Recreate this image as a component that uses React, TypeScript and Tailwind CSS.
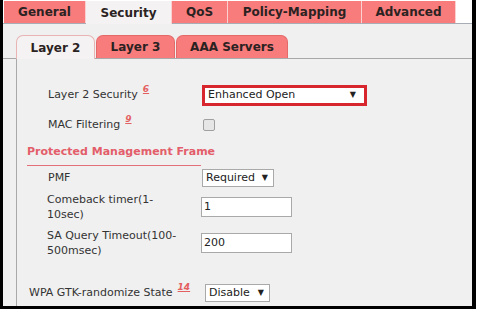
import React from 'react';

const font = { fontFamily: '"DejaVu Sans", Verdana, sans-serif' };

const mainTabs = [
  { label: 'General', w: 'w-[82px]' },
  { label: 'Security', w: 'w-[86px]', active: true },
  { label: 'QoS', w: 'w-[56px]' },
  { label: 'Policy-Mapping', w: 'w-[134px]' },
  { label: 'Advanced', w: 'w-[94px]' },
];

const subTabs = [
  { label: 'Layer 2', w: 'w-[79px]', active: true },
  { label: 'Layer 3', w: 'w-[79px]' },
  { label: 'AAA Servers', w: 'w-[112px]' },
];

const Sup: React.FC<{ n: string }> = ({ n }) => (
  <span className="ml-[5px] relative -top-[5px] text-[9px] italic font-bold text-[#e46060] underline underline-offset-1">
    {n}
  </span>
);

const Select: React.FC<{ value: string; w: string }> = ({ value, w }) => (
  <div className={`${w} h-[18px] bg-white border border-[#a9a9a9] flex items-center justify-between pl-[3px] pr-[5px] text-[11px] text-[#222]`}>
    <span>{value}</span>
    <span className="text-[8px]">▼</span>
  </div>
);

const Input: React.FC<{ value: string }> = ({ value }) => (
  <div className="w-[91px] h-[20px] bg-white border border-[#a9a9a9] flex items-center pl-[2px] text-[11px] text-[#222]">
    {value}
  </div>
);

export default function App() {
  return (
    <div className="w-[478px] h-[312px] bg-white overflow-hidden" style={font}>
      <div className="w-[476px] h-[309px] border-l-[3px] border-r-[4px] border-b-[3px] border-black bg-[#f0f0f0] flex flex-col">
        {/* top tabs */}
        <div className="h-[24px] bg-white flex items-end pl-[1px] border-b border-[#a8acb4] shrink-0">
          {mainTabs.map((t) => (
            <div
              key={t.label}
              className={`${t.w} h-[22px] flex items-center justify-center text-[12px] font-bold text-[#2b2222] border-r border-[#fbd0d0] ${
                t.active ? 'bg-[#f4f2f2] h-[23px] -mb-px' : 'bg-[#f87c7c]'
              }`}
            >
              {t.label}
            </div>
          ))}
        </div>

        {/* sub tabs */}
        <div className="mt-[11px] flex items-end pl-[13px] border-b border-[#a9a9a9] shrink-0">
          {subTabs.map((t) => (
            <div
              key={t.label}
              className={`${t.w} h-[23px] rounded-t-[7px] border border-b-0 flex items-center justify-center text-[12px] font-bold text-[#2b2222] mr-px ${
                t.active ? 'bg-[#f4f2f2] border-[#e8b4b4] -mb-px h-[24px]' : 'bg-[#f87c7c] border-[#e46a6a]'
              }`}
            >
              {t.label}
            </div>
          ))}
        </div>

        {/* panel */}
        <div className="flex-1 ml-[13px] border-l border-[#a9a9a9] flex flex-col text-[11px] text-[#333]">
          <div className="mt-[26px] h-[20px] flex items-center">
            <div className="w-[185px] pl-[31px] flex items-center">
              Layer 2 Security
              <Sup n="6" />
            </div>
            <div className="w-[165px] h-[21px] bg-white border-[3px] border-[#d7262e] flex items-center justify-between pl-[3px] pr-[8px] text-[11px] text-[#222]">
              <span>Enhanced Open</span>
              <span className="text-[8px]">▼</span>
            </div>
          </div>

          <div className="mt-[10px] h-[20px] flex items-center">
            <div className="w-[186px] pl-[31px] flex items-center">
              MAC Filtering
              <Sup n="9" />
            </div>
            <div className="w-[12px] h-[12px] rounded-[2px] border border-[#a0a0a0] bg-[#e6e6e6]" />
          </div>

          <div className="mt-[10px] ml-[10px] w-[174px] pb-[6px] border-b border-[#e37078] text-[11px] leading-[14px] font-bold text-[#e35d6a] whitespace-nowrap">
            Protected Management Frame
          </div>

          <div className="mt-[3px] h-[18px] flex items-center">
            <div className="w-[185px] pl-[31px]">PMF</div>
            <Select value="Required" w="w-[72px]" />
          </div>

          <div className="mt-[6px] h-[28px] flex items-center">
            <div className="w-[184px] pl-[30px] leading-[15px]">
              Comeback timer(1-
              <br />
              10sec)
            </div>
            <Input value="1" />
          </div>

          <div className="mt-[8px] h-[28px] flex items-center">
            <div className="w-[184px] pl-[30px] leading-[15px]">
              SA Query Timeout(100-
              <br />
              500msec)
            </div>
            <Input value="200" />
          </div>

          <div className="mt-[27px] h-[18px] flex items-center">
            <div className="w-[188px] pl-[12px] flex items-center whitespace-nowrap">
              WPA GTK-randomize State
              <Sup n="14" />
            </div>
            <Select value="Disable" w="w-[65px]" />
          </div>
        </div>
      </div>
    </div>
  );
}
